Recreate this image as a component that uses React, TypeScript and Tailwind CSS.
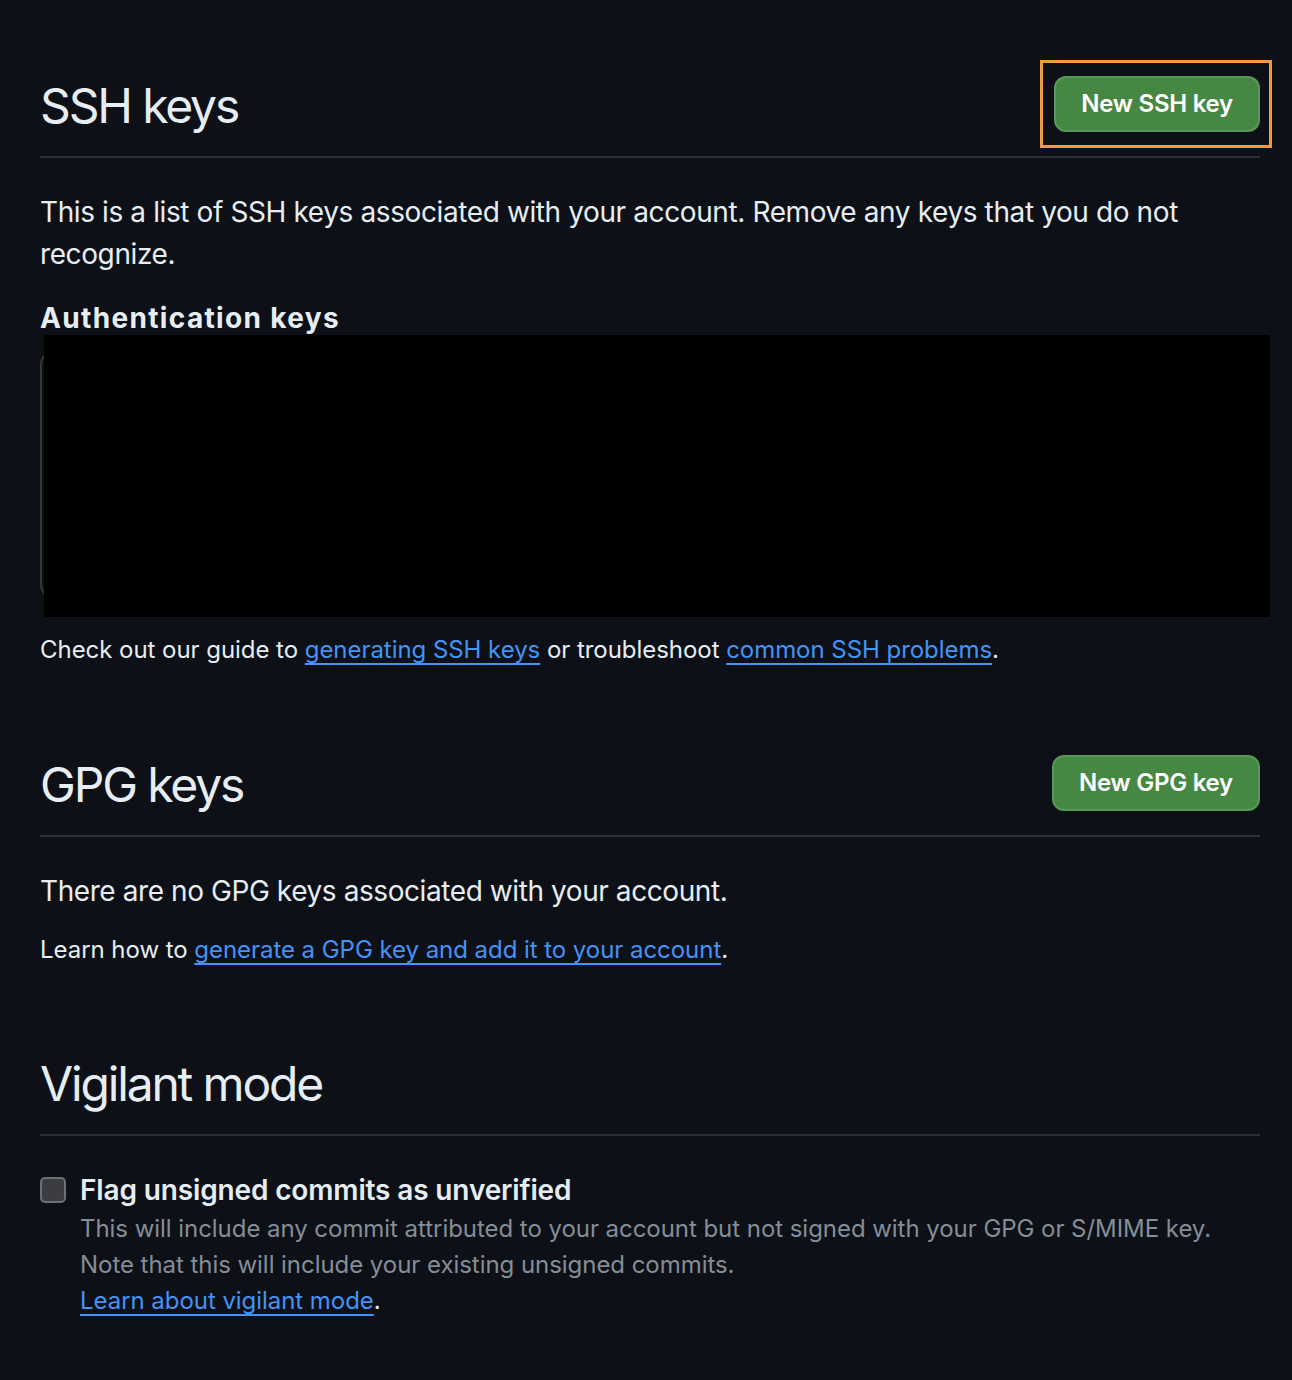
import React from "react";

const font = { fontFamily: "Inter, 'Noto Sans', sans-serif" };

function Link({ children }: { children: React.ReactNode }) {
  return (
    <a
      href="#"
      className="text-[#4493f8] underline decoration-2 underline-offset-[5px]"
    >
      {children}
    </a>
  );
}

function SubHead({
  title,
  action,
  highlight,
}: {
  title: string;
  action?: string;
  highlight?: boolean;
}) {
  return (
    <div className="flex items-start justify-between border-b-2 border-[#2a2f37] pb-[20px]">
      <h2 className="text-[48px] font-normal leading-[60px] tracking-[-0.045em] text-[#e6edf3]">
        {title}
      </h2>
      {action && (
        <div className="relative">
          <button className="h-[56px] rounded-[12px] border-2 border-[#58985a] bg-[#468744] px-[25px] text-[24px] font-semibold tracking-[-0.01em] text-white">
            {action}
          </button>
          {highlight && (
            <span className="pointer-events-none absolute -top-[16px] -bottom-[16px] -left-[14px] -right-[12px] border-[3px] border-[#ef9b3b]" />
          )}
        </div>
      )}
    </div>
  );
}

export default function App() {
  return (
    <div className="min-h-[1380px] bg-[#0d1117] px-[40px] pt-[76px] text-[#e6edf3]" style={font}>
      <div className="w-[1220px]">
        <SubHead title="SSH keys" action="New SSH key" highlight />

        <p className="mt-[33px] text-[28px] leading-[42px] tracking-[-0.014em]">
          This is a list of SSH keys associated with your account. Remove any keys that you do not
          recognize.
        </p>

        <h3 className="mt-[22px] text-[28px] font-bold leading-[42px] tracking-[0.048em]">
          Authentication keys
        </h3>

        <div className="relative mt-[13px] h-[245px] rounded-[12px] border-2 border-[#30363d]">
          <div className="absolute -top-[19px] left-[2px] h-[282px] w-[1226px] bg-black" />
        </div>

        <p className="mt-[35px] text-[24px] leading-[36px] tracking-[-0.002em]">
          Check out our guide to <Link>generating SSH keys</Link> or troubleshoot{" "}
          <Link>common SSH problems</Link>.
        </p>

        <div className="mt-[87px]">
          <SubHead title="GPG keys" action="New GPG key" />
        </div>

        <p className="mt-[33px] text-[28px] leading-[42px] tracking-[-0.015em]">
          There are no GPG keys associated with your account.
        </p>
        <p className="mt-[20px] text-[24px] leading-[36px] tracking-[-0.002em]">
          Learn how to <Link>generate a GPG key and add it to your account</Link>.
        </p>

        <div className="mt-[86px]">
          <SubHead title="Vigilant mode" />
        </div>

        <div className="mt-[33px] flex gap-[14px]">
          <div className="mt-[8px] h-[26px] w-[26px] shrink-0 rounded-[5px] border-2 border-[#6b7078] bg-[#3b3d41]" />
          <div>
            <div className="text-[28px] font-semibold leading-[42px] tracking-[-0.005em]">
              Flag unsigned commits as unverified
            </div>
            <p className="text-[24px] leading-[36px] tracking-[-0.002em] text-[#858d97]">
              This will include any commit attributed to your account but not signed with your GPG or
              S/MIME key.
              <br />
              Note that this will include your existing unsigned commits.
              <br />
              <Link>Learn about vigilant mode</Link>
              <span className="text-[#e6edf3]">.</span>
            </p>
          </div>
        </div>
      </div>
    </div>
  );
}
